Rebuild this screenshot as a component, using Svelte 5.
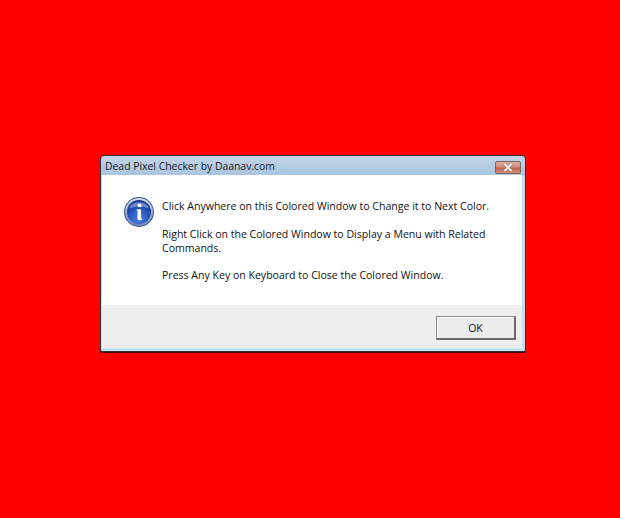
<script>
	const title = 'Dead Pixel Checker by Daanav.com';
</script>

<div class="screen">
	<div class="dialog">
		<div class="titlebar">
			<span class="title">{title}</span>
			<button class="close" aria-label="Close">
				<svg width="12" height="9" viewBox="0 0 12 9">
					<path d="M2.5 1 L9.5 8 M9.5 1 L2.5 8" stroke="#5f4a4c" stroke-width="3.4" fill="none" opacity="0.6" />
					<path d="M2.5 1 L9.5 8 M9.5 1 L2.5 8" stroke="#f6f2f2" stroke-width="2.2" fill="none" />
				</svg>
			</button>
		</div>
		<div class="client">
			<div class="body">
				<svg class="info" width="30" height="30" viewBox="0 0 30 30">
					<defs>
						<radialGradient id="orb" cx="0.5" cy="0.75" r="0.75">
							<stop offset="0" stop-color="#4f86e8" />
							<stop offset="0.6" stop-color="#2450b4" />
							<stop offset="1" stop-color="#1a3486" />
						</radialGradient>
						<linearGradient id="rim" x1="0" y1="0" x2="0" y2="1">
							<stop offset="0" stop-color="#d4dbe8" />
							<stop offset="1" stop-color="#6f86b8" />
						</linearGradient>
					</defs>
					<circle cx="15" cy="15" r="15" fill="#34528f" />
					<circle cx="15" cy="15" r="14" fill="url(#rim)" />
					<circle cx="15" cy="15" r="12" fill="url(#orb)" />
					<path d="M5 11.5 A10.5 9 0 0 1 25 11.5 Q15 7.5 5 11.5Z" fill="#a9c2ee" opacity="0.55" />
					<ellipse cx="15.6" cy="8.4" rx="2" ry="1.9" fill="#fff" />
					<path d="M13.9 12.2 H17 V20.6 Q17 21.6 18 21.6 V22.6 Q15.4 23.6 14 22.8 Q13.4 22.2 13.6 20.8 V14.6 Q13.4 13.6 12.6 13.6 V12.8Z" fill="#fff" />
				</svg>
				<div class="message">
					<p>Click Anywhere on this Colored Window to Change it to Next Color.</p>
					<p>Right Click on the Colored Window to Display a Menu with Related Commands.</p>
					<p>Press Any Key on Keyboard to Close the Colored Window.</p>
				</div>
			</div>
			<div class="footer">
				<button class="ok">OK</button>
			</div>
		</div>
	</div>
</div>

<style>
	:global(body) {
		margin: 0;
		background: #fe0000;
	}

	.screen {
		height: 518px;
		box-sizing: border-box;
		padding: 155px 0 0 100px;
		font-family: 'Open Sans', 'Noto Sans', sans-serif;
		font-size: 10.56px;
		color: #111;
	}

	.dialog {
		width: 426px;
		height: 197px;
		box-sizing: border-box;
		display: flex;
		flex-direction: column;
		border: 1px solid #30343c;
		border-radius: 4px 4px 2px 2px;
		padding: 0 3px 3px 1px;
		background: linear-gradient(180deg, #c3d5e7 0, #a9c4dd 19px, #c4dcec 20px, #c6e0ee 100%);
		box-shadow: 0 1px 0 #500000;
	}

	.titlebar {
		height: 19px;
		flex: none;
		display: flex;
		align-items: center;
		justify-content: space-between;
		padding-left: 3px;
	}

	.title {
		font-size: 10.4px;
		color: #15191e;
	}

	.close {
		width: 26px;
		height: 13px;
		margin: 3px 1px 0 0;
		padding: 0;
		display: flex;
		align-items: center;
		justify-content: center;
		border: 1px solid #7d6367;
		border-radius: 2px;
		background: linear-gradient(180deg, #dcae9f 0, #d08d7c 45%, #c4614c 55%, #d08a76 100%);
	}

	.client {
		flex: 1;
		display: flex;
		flex-direction: column;
		background: #fff;
	}

	.body {
		flex: 1;
		display: flex;
		gap: 8px;
		padding: 22px 0 0 22px;
	}

	.info {
		flex: none;
	}

	.message {
		width: 345px;
		padding-top: 2px;
	}

	.message p {
		margin: 0 0 13.5px;
		line-height: 14px;
	}

	.footer {
		height: 43px;
		flex: none;
		box-sizing: border-box;
		display: flex;
		justify-content: flex-end;
		align-items: flex-start;
		padding: 11px 6px 0 0;
		background: #efefef;
	}

	.ok {
		width: 80px;
		height: 24px;
		padding: 0;
		font: inherit;
		font-size: 10.6px;
		color: #111;
		border: 1px solid #8a8a8a;
		border-right: 2px solid #6c6c6c;
		border-bottom: 2px solid #6c6c6c;
		background: #ececec;
		box-shadow: inset 1px 1px 0 #fff;
	}
</style>
